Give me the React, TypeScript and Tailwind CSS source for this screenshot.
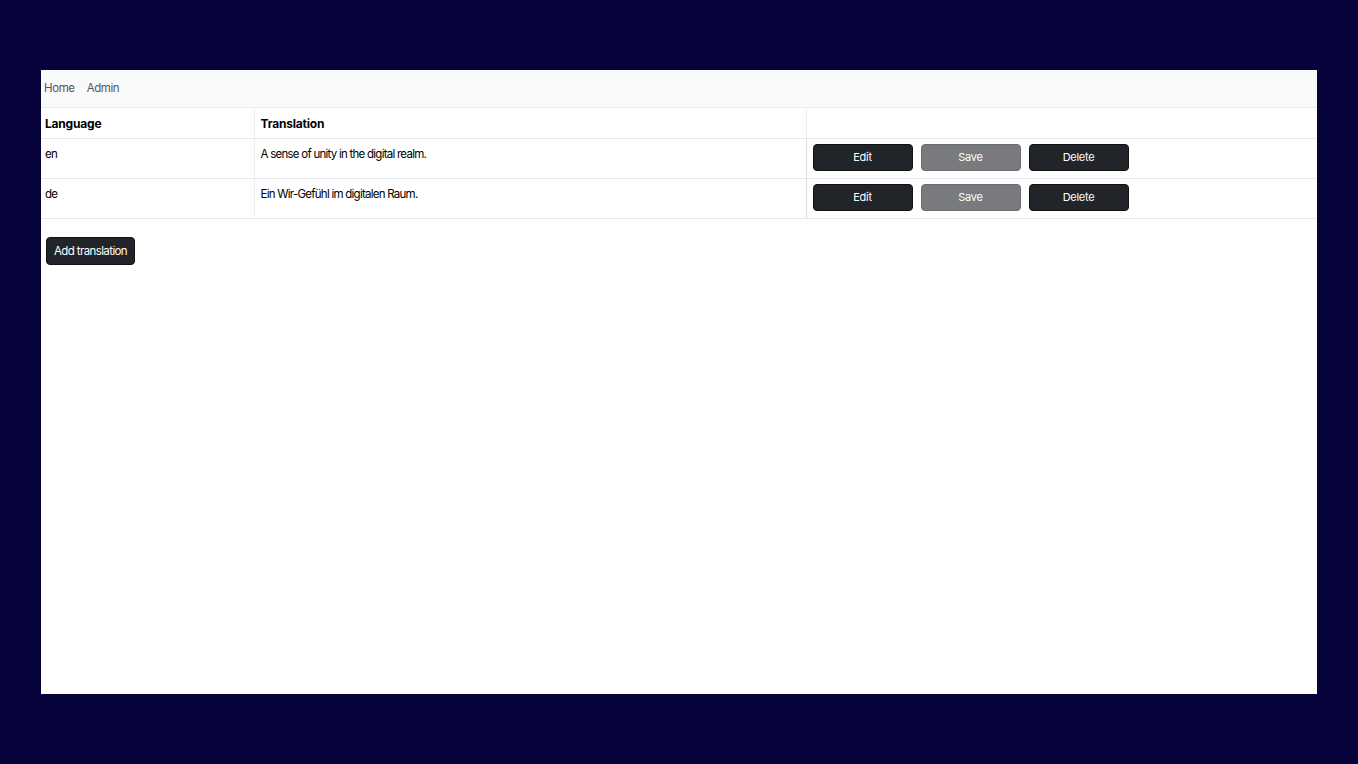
import React from "react";

const rows = [
  { lang: "en", text: "A sense of unity in the digital realm." },
  { lang: "de", text: "Ein Wir-Gefühl im digitalen Raum." },
];

export default function App() {
  return (
    <div className="w-[1358px] h-[764px] bg-[#06033b] pt-[70px] pl-[41px]" style={{ fontFamily: "Inter, 'Liberation Sans', sans-serif" }}>
      <div className="w-[1276px] h-[624px] bg-white">
        <nav className="h-[38px] bg-[#f8f9fa] border-b border-[#e9ecef] flex items-center gap-[12px] px-[3px] text-[11.5px] text-[#555] tracking-[-0.4px]">
          <span>Home</span>
          <span>Admin</span>
        </nav>
        <table className="w-full border-collapse text-[11.5px] text-black tracking-[-0.75px]">
          <thead>
            <tr className="h-[30px] border-b border-[#e5e7eb]">
              <th className="w-[213px] text-left align-top pt-[7px] font-bold text-[12px] tracking-[-0.2px] px-[4px] border-r border-[#eceef0]">Language</th>
              <th className="w-[552px] text-left align-top pt-[7px] font-bold text-[12px] tracking-[-0.2px] px-[6px] border-r border-[#eceef0]">Translation</th>
              <th></th>
            </tr>
          </thead>
          <tbody>
            {rows.map((r) => (
              <tr key={r.lang} className="h-[40px] border-b border-[#e5e7eb]">
                <td className="align-top px-[4px] pt-[7px] border-r border-[#eceef0]">{r.lang}</td>
                <td className="align-top px-[6px] pt-[7px] border-r border-[#dcdfe2]">{r.text}</td>
                <td className="align-top pl-[6px] pt-[5px]">
                  <div className="flex gap-[8px]">
                    <button className="w-[100px] h-[27px] rounded-[4px] bg-[#212529] border border-[#111] text-white text-[11px] tracking-[-0.3px]">Edit</button>
                    <button className="w-[100px] h-[27px] rounded-[4px] bg-[#797a7e] border border-[#6c6d70] text-white text-[11px] tracking-[-0.3px]">Save</button>
                    <button className="w-[100px] h-[27px] rounded-[4px] bg-[#212529] border border-[#111] text-white text-[11px] tracking-[-0.3px]">Delete</button>
                  </div>
                </td>
              </tr>
            ))}
          </tbody>
        </table>
        <div className="pl-[5px] pt-[18px]">
          <button className="w-[89px] h-[28px] rounded-[4px] bg-[#212529] border border-[#111] text-white text-[11.5px] tracking-[-0.6px]">Add translation</button>
        </div>
      </div>
    </div>
  );
}
